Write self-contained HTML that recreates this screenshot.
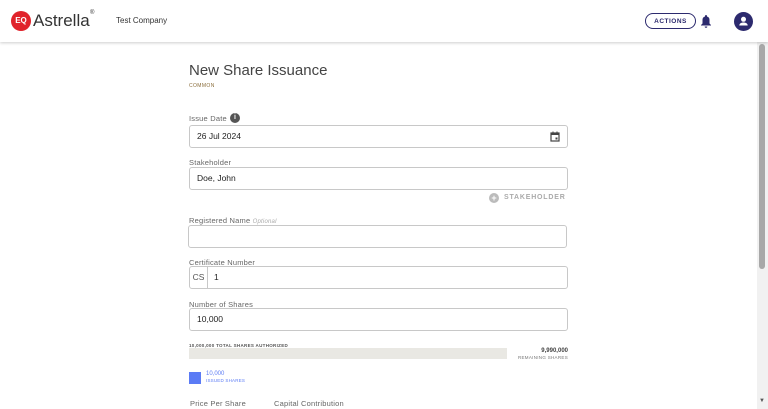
<!DOCTYPE html>
<html><head><style>
*{box-sizing:border-box;margin:0;padding:0}
body{width:768px;height:409px;overflow:hidden;background:#fff;font-family:"Liberation Sans",sans-serif;position:relative;color:#333}
.hdr{position:absolute;left:0;top:0;width:768px;height:42px;background:#fff;box-shadow:0 1px 3px rgba(0,0,0,.2);z-index:2}
.a{position:absolute}
.lbl{position:absolute;font-size:7.5px;color:#666;letter-spacing:.2px}
.inp{position:absolute;border:1px solid #c8c8c8;border-radius:3px;height:23px;font-size:8.5px;color:#222;padding:0 7px;line-height:21px}
.sb{position:absolute;left:757px;top:42px;width:11px;height:367px;background:#f1f1f1}
</style></head><body>
<div class="hdr">
 <div class="a" style="left:11px;top:11px;width:20px;height:20px;border-radius:50%;background:#e0232b;color:#fff;font-size:8px;font-weight:bold;text-align:center;line-height:20px">EQ</div>
 <div class="a" style="left:33px;top:11px;font-size:17px;line-height:20px;color:#333">Astrella</div>
 <div class="a" style="left:90px;top:10px;font-size:6px;color:#333">®</div>
 <div class="a" style="left:116px;top:16px;font-size:8px;color:#333">Test Company</div>
 <div class="a" style="left:645px;top:13px;width:51px;height:16px;border:1px solid #2c2a6e;border-radius:9px;font-size:6.5px;font-weight:bold;color:#2c2a6e;text-align:center;line-height:15px;letter-spacing:.5px">ACTIONS</div>
 <svg class="a" style="left:700px;top:14px" width="12" height="14" viewBox="0 0 12 14"><path d="M6 1a1 1 0 0 1 1 1v.5A3.5 3.5 0 0 1 9.5 6v3.5l1.5 1.5v.5H1v-.5l1.5-1.5V6A3.5 3.5 0 0 1 5 2.5V2a1 1 0 0 1 1-1zM4.7 12.5h2.6a1.3 1.3 0 0 1-2.6 0z" fill="#2c2a6e"/></svg>
 <svg class="a" style="left:734px;top:12px" width="19" height="19" viewBox="0 0 19 19"><circle cx="9.5" cy="9.5" r="9.5" fill="#2c2a6e"/><circle cx="9.5" cy="7.3" r="2.5" fill="#fff"/><path d="M5.3 13.5c0-2 2-3 4.2-3s4.2 1 4.2 3z" fill="#fff"/></svg>
</div>
<div class="sb"><div class="a" style="left:2px;top:2px;width:6px;height:225px;background:#a8a8a8;border-radius:3px"></div><div class="a" style="left:2px;top:356px;font-size:6px;color:#555">▼</div></div>
<div class="a" style="left:189px;top:62px;font-size:15px;color:#444">New Share Issuance</div>
<div class="a" style="left:189px;top:83px;font-size:5px;color:#8a6d3b;letter-spacing:.4px">COMMON</div>
<div class="lbl" style="left:189px;top:114px">Issue Date</div>
<div class="a" style="left:230px;top:113px;width:10px;height:10px;border-radius:50%;background:#555;color:#fff;font-size:7px;text-align:center;line-height:10px;font-weight:bold">i</div>
<div class="inp" style="left:189px;top:125px;width:379px">26 Jul 2024</div>
<svg class="a" style="left:550px;top:131px" width="10" height="11" viewBox="0 0 10 11"><rect x="1" y="2" width="8" height="8" fill="none" stroke="#444" stroke-width="1.2"/><rect x="1" y="2" width="8" height="2" fill="#444"/><rect x="5.5" y="6.5" width="2" height="2" fill="#444"/><rect x="2.5" y="0.5" width="1" height="2" fill="#444"/><rect x="6.5" y="0.5" width="1" height="2" fill="#444"/></svg>
<div class="lbl" style="left:189px;top:158px">Stakeholder</div>
<div class="inp" style="left:189px;top:167px;width:379px">Doe, John</div>
<div class="a" style="left:489px;top:193px;width:10px;height:10px;border-radius:50%;background:#bbb;color:#fff;font-size:9px;text-align:center;line-height:10px;font-weight:bold">+</div>
<div class="a" style="left:504px;top:194px;font-size:7px;color:#aaa;letter-spacing:.8px;font-weight:bold">STAKEHOLDER</div>
<div class="lbl" style="left:189px;top:216px">Registered Name <i style="color:#aaa;font-size:6px">Optional</i></div>
<div class="inp" style="left:188px;top:225px;width:379px"></div>
<div class="lbl" style="left:189px;top:258px">Certificate Number</div>
<div class="inp" style="left:189px;top:266px;width:379px;padding:0"><span style="display:inline-block;width:18px;border-right:1px solid #c8c8c8;text-align:center;color:#555">CS</span><span style="padding-left:6px">1</span></div>
<div class="lbl" style="left:189px;top:300px">Number of Shares</div>
<div class="inp" style="left:189px;top:308px;width:379px">10,000</div>
<div class="a" style="left:189px;top:343px;font-size:4.5px;color:#555;font-weight:bold;letter-spacing:.3px">10,000,000 TOTAL SHARES AUTHORIZED</div>
<div class="a" style="left:189px;top:348px;width:318px;height:11px;background:#e9e8e3"></div>
<div class="a" style="left:510px;top:348px;width:58px;text-align:right;font-size:6px;color:#444;font-weight:bold">9,990,000</div>
<div class="a" style="left:505px;top:355px;width:63px;text-align:right;font-size:4.5px;color:#777;letter-spacing:.3px">REMAINING SHARES</div>
<div class="a" style="left:189px;top:372px;width:12px;height:12px;background:#5b7bf5"></div>
<div class="a" style="left:206px;top:371px;font-size:6px;color:#5b7bf5">10,000</div>
<div class="a" style="left:206px;top:378px;font-size:4.5px;color:#5b7bf5;letter-spacing:.2px">ISSUED SHARES</div>
<div class="lbl" style="left:190px;top:399px;font-size:7.5px">Price Per Share</div>
<div class="lbl" style="left:274px;top:399px;font-size:7.5px">Capital Contribution</div>
</body></html>
